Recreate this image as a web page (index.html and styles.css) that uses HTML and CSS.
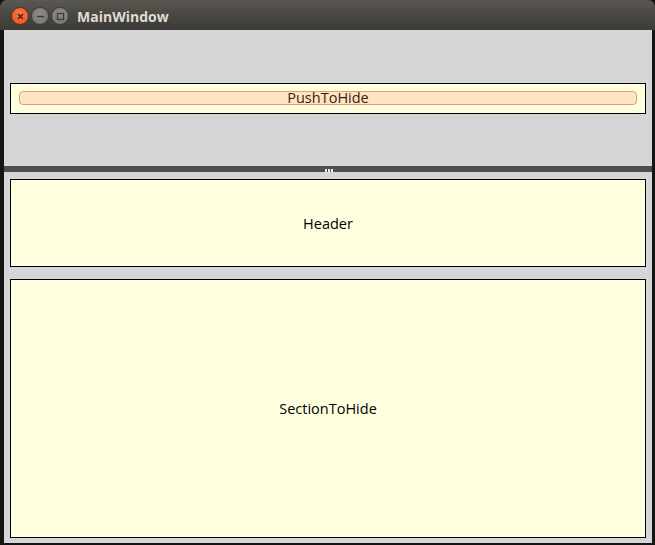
FILE: index.html
```html
<!DOCTYPE html>
<html>
<head>
<meta charset="utf-8">
<link rel="stylesheet" href="styles.css">
</head>
<body>
<div class="window">
  <div class="titlebar">
    <div class="controls">
      <span class="wbtn close"><svg width="7" height="7" viewBox="0 0 7 7"><path d="M1 1L6 6M6 1L1 6" stroke="#4a1a08" stroke-width="1.3"/></svg></span>
      <span class="wbtn"><svg width="9" height="9" viewBox="0 0 9 9"><path d="M1 4.5H8" stroke="#3b3a36" stroke-width="1.3"/></svg></span>
      <span class="wbtn"><svg width="9" height="9" viewBox="0 0 9 9"><rect x="1.5" y="1.5" width="6" height="6" fill="none" stroke="#3b3a36" stroke-width="1.2"/></svg></span>
    </div>
    <div class="title">MainWindow</div>
  </div>
  <div class="client">
    <div class="toppane">
      <div class="btnframe">
        <div class="pushbtn">PushToHide</div>
      </div>
    </div>
    <div class="splitter"><span class="grip"><i></i><i></i><i></i></span></div>
    <div class="bottompane">
      <div class="box header">Header</div>
      <div class="box section">SectionToHide</div>
    </div>
  </div>
</div>
</body>
</html>
```
FILE: styles.css
```css
html, body {
  margin: 0;
  padding: 0;
  background: #151515;
  width: 655px;
  height: 545px;
  overflow: hidden;
}
.window {
  width: 655px;
  height: 545px;
  display: flex;
  flex-direction: column;
  box-sizing: border-box;
  padding: 0 3px 2px 4px;
  background: #151515;
  border-radius: 7px 7px 0 0;
}
.titlebar {
  height: 30px;
  margin: 0 -3px 0 -4px;
  background: linear-gradient(#5b5852, #46443f 60%, #3c3b37);
  border-radius: 7px 7px 0 0;
  display: flex;
  align-items: center;
  flex-shrink: 0;
}
.controls {
  display: flex;
  gap: 2px;
  margin-left: 11px;
  margin-top: 2px;
}
.wbtn {
  width: 16px;
  height: 16px;
  border-radius: 50%;
  background: radial-gradient(circle at 50% 35%, #8d8c86, #74736d);
  border: 1px solid #3f3e3a;
  display: flex;
  align-items: center;
  justify-content: center;
}
.wbtn.close {
  background: radial-gradient(circle at 50% 35%, #f57a4c, #e4511c);
  border-color: #6a3018;
}
.title {
  margin-left: 8px;
  font-family: "Open Sans", "DejaVu Sans", sans-serif;
  font-weight: bold;
  font-size: 14px;
  color: #dfdbd2;
  margin-top: 2px;
}
.client {
  flex: 1;
  display: flex;
  flex-direction: column;
  background: #d6d6d6;
  font-family: "Open Sans", "DejaVu Sans", sans-serif;
}
.toppane {
  height: 136px;
  display: flex;
  align-items: center;
  padding: 0 6px;
  flex-shrink: 0;
}
.btnframe {
  flex: 1;
  height: 31px;
  box-sizing: border-box;
  border: 1px solid #000;
  background: #ffffe0;
  padding: 7px 8px;
  display: flex;
  flex-direction: column;
}
.pushbtn {
  height: 14px;
  box-sizing: border-box;
  border: 1px solid #df9e74;
  border-radius: 4px;
  background: #ffe4c4;
  color: #3a1e0a;
  font-size: 14.5px;
  line-height: 12px;
  text-align: center;
}
.splitter {
  height: 6px;
  background: #4e4e4e;
  flex-shrink: 0;
  display: flex;
  justify-content: center;
  align-items: flex-end;
}
.grip {
  display: flex;
  gap: 1px;
  margin-left: 1px;
}
.grip i {
  width: 2px;
  height: 3px;
  background: #f2f2f2;
}
.bottompane {
  flex: 1;
  display: flex;
  flex-direction: column;
  padding: 7px 6px 5px 6px;
  gap: 12px;
}
.box {
  border: 1px solid #000;
  background: #ffffe0;
  display: flex;
  align-items: center;
  justify-content: center;
  font-size: 14.5px;
  color: #000;
}
.header {
  height: 88px;
  box-sizing: border-box;
  flex-shrink: 0;
  padding-top: 1px;
}
.section {
  flex: 1;
}
```
